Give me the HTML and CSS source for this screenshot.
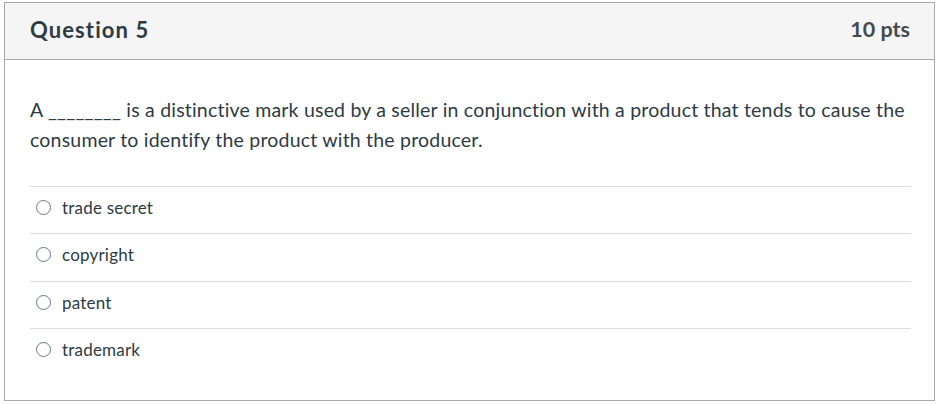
FILE: index.html
```html
<!DOCTYPE html>
<html lang="en">
<head>
    <meta charset="UTF-8">
    <title>Question 5</title>
    <link rel="stylesheet" href="styles.css">
</head>
<body>
    <div class="question">
        <div class="header">
            <span class="title">Question 5</span>
            <span class="points">10 pts</span>
        </div>
        <div class="content">
            <p class="text">A ________ is a distinctive mark used by a seller in conjunction with a product that tends to cause the consumer to identify the product with the producer.</p>
            <div class="answers">
                <label class="answer"><span class="radio"></span>trade secret</label>
                <label class="answer"><span class="radio"></span>copyright</label>
                <label class="answer"><span class="radio"></span>patent</label>
                <label class="answer"><span class="radio"></span>trademark</label>
            </div>
        </div>
    </div>
</body>
</html>
```

FILE: styles.css
```css
html {
    font-family: Lato, "Open Sans", sans-serif;
}

body {
    margin: 0;
    padding: 2px 4px 0 4px;
    background-color: #ffffff;
    color: #2d3b45;
}

.question {
    width: 929px;
    height: 397px;
    border: 1px solid #a9a9a9;
}

.header {
    display: flex;
    justify-content: space-between;
    align-items: center;
    height: 52px;
    padding: 0 24px 4px 25px;
    background-color: #f5f5f5;
    border-bottom: 1px solid #a9a9a9;
}

.title,
.points {
    font-size: 22px;
    font-weight: bold;
    color: #2d3b45;
}

.title {
    letter-spacing: 1.1px;
}

.points {
    font-size: 21.5px;
    color: #444b50;
}

.content {
    padding: 35px 23px 0 25px;
}

.text {
    margin: 0;
    font-size: 19.5px;
    line-height: 30px;
    letter-spacing: 0.2px;
    color: #2d3b45;
    font-weight: 400;
}

.answers {
    margin-top: 31px;
}

.answer {
    display: flex;
    align-items: center;
    height: 41.33px;
    padding-bottom: 5px;
    border-top: 1px solid #dddddd;
    font-size: 17px;
    letter-spacing: 0.2px;
    color: #2d3b45;
}

.radio {
    width: 13px;
    height: 13px;
    border: 1px solid #6b7780;
    border-radius: 50%;
    margin: 0 11px 0 6px;
}
```
